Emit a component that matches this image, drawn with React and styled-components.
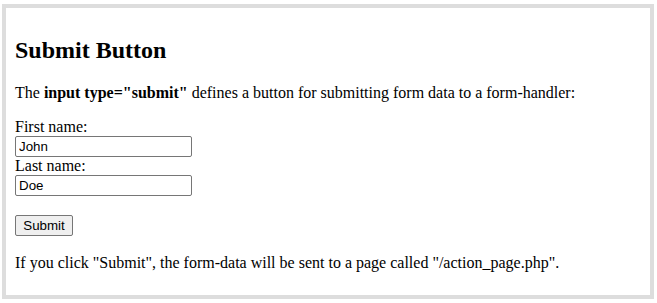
import React from "react";
import styled, { createGlobalStyle } from "styled-components";

const GlobalStyle = createGlobalStyle`
  html, body {
    margin: 0;
    background: #ffffff;
  }
  body {
    font-family: "Liberation Serif", "Times New Roman", serif;
    font-size: 16px;
    color: #000000;
  }
`;

const Page = styled.div`
  padding: 4px 3px 4px 2px;
`;

const Frame = styled.div`
  box-sizing: border-box;
  height: 295px;
  border: 4px solid #dddddd;
  padding: 9px 9px 8px;
  overflow: hidden;
`;

const Heading = styled.h2`
  font-size: 24px;
  font-weight: bold;
  margin: 20px 0;
`;

const Para = styled.p`
  margin: 16px 0;
`;

const Form = styled.form`
  margin: 0;
  padding-bottom: 2px;
`;

const Label = styled.label`
  display: block;
`;

const TextInput = styled.input`
  box-sizing: border-box;
  display: block;
  width: 177px;
  height: 21px;
  margin: 0;
  padding: 1px 3px;
  border: 1px solid #767676;
  border-radius: 2px;
  font-family: "Liberation Sans", Arial, sans-serif;
  font-size: 13.33px;
  color: #000000;
  background: #ffffff;
`;

const SubmitButton = styled.input`
  box-sizing: border-box;
  display: block;
  width: 58px;
  height: 21px;
  margin-top: 19px;
  padding: 1px 6px;
  border: 1px solid #767676;
  border-radius: 2px;
  background: #efefef;
  font-family: "Liberation Sans", Arial, sans-serif;
  font-size: 13.33px;
  color: #000000;
`;

export default function App() {
  return (
    <Page>
      <GlobalStyle />
      <Frame>
        <Heading>Submit Button</Heading>
        <Para>
          The <b>input type="submit"</b> defines a button for submitting form
          data to a form-handler:
        </Para>
        <Form onSubmit={(e) => e.preventDefault()}>
          <Label htmlFor="fname">First name:</Label>
          <TextInput type="text" id="fname" name="fname" defaultValue="John" />
          <Label htmlFor="lname">Last name:</Label>
          <TextInput type="text" id="lname" name="lname" defaultValue="Doe" />
          <SubmitButton type="submit" value="Submit" />
        </Form>
        <Para>
          If you click "Submit", the form-data will be sent to a page called
          "/action_page.php".
        </Para>
      </Frame>
    </Page>
  );
}
